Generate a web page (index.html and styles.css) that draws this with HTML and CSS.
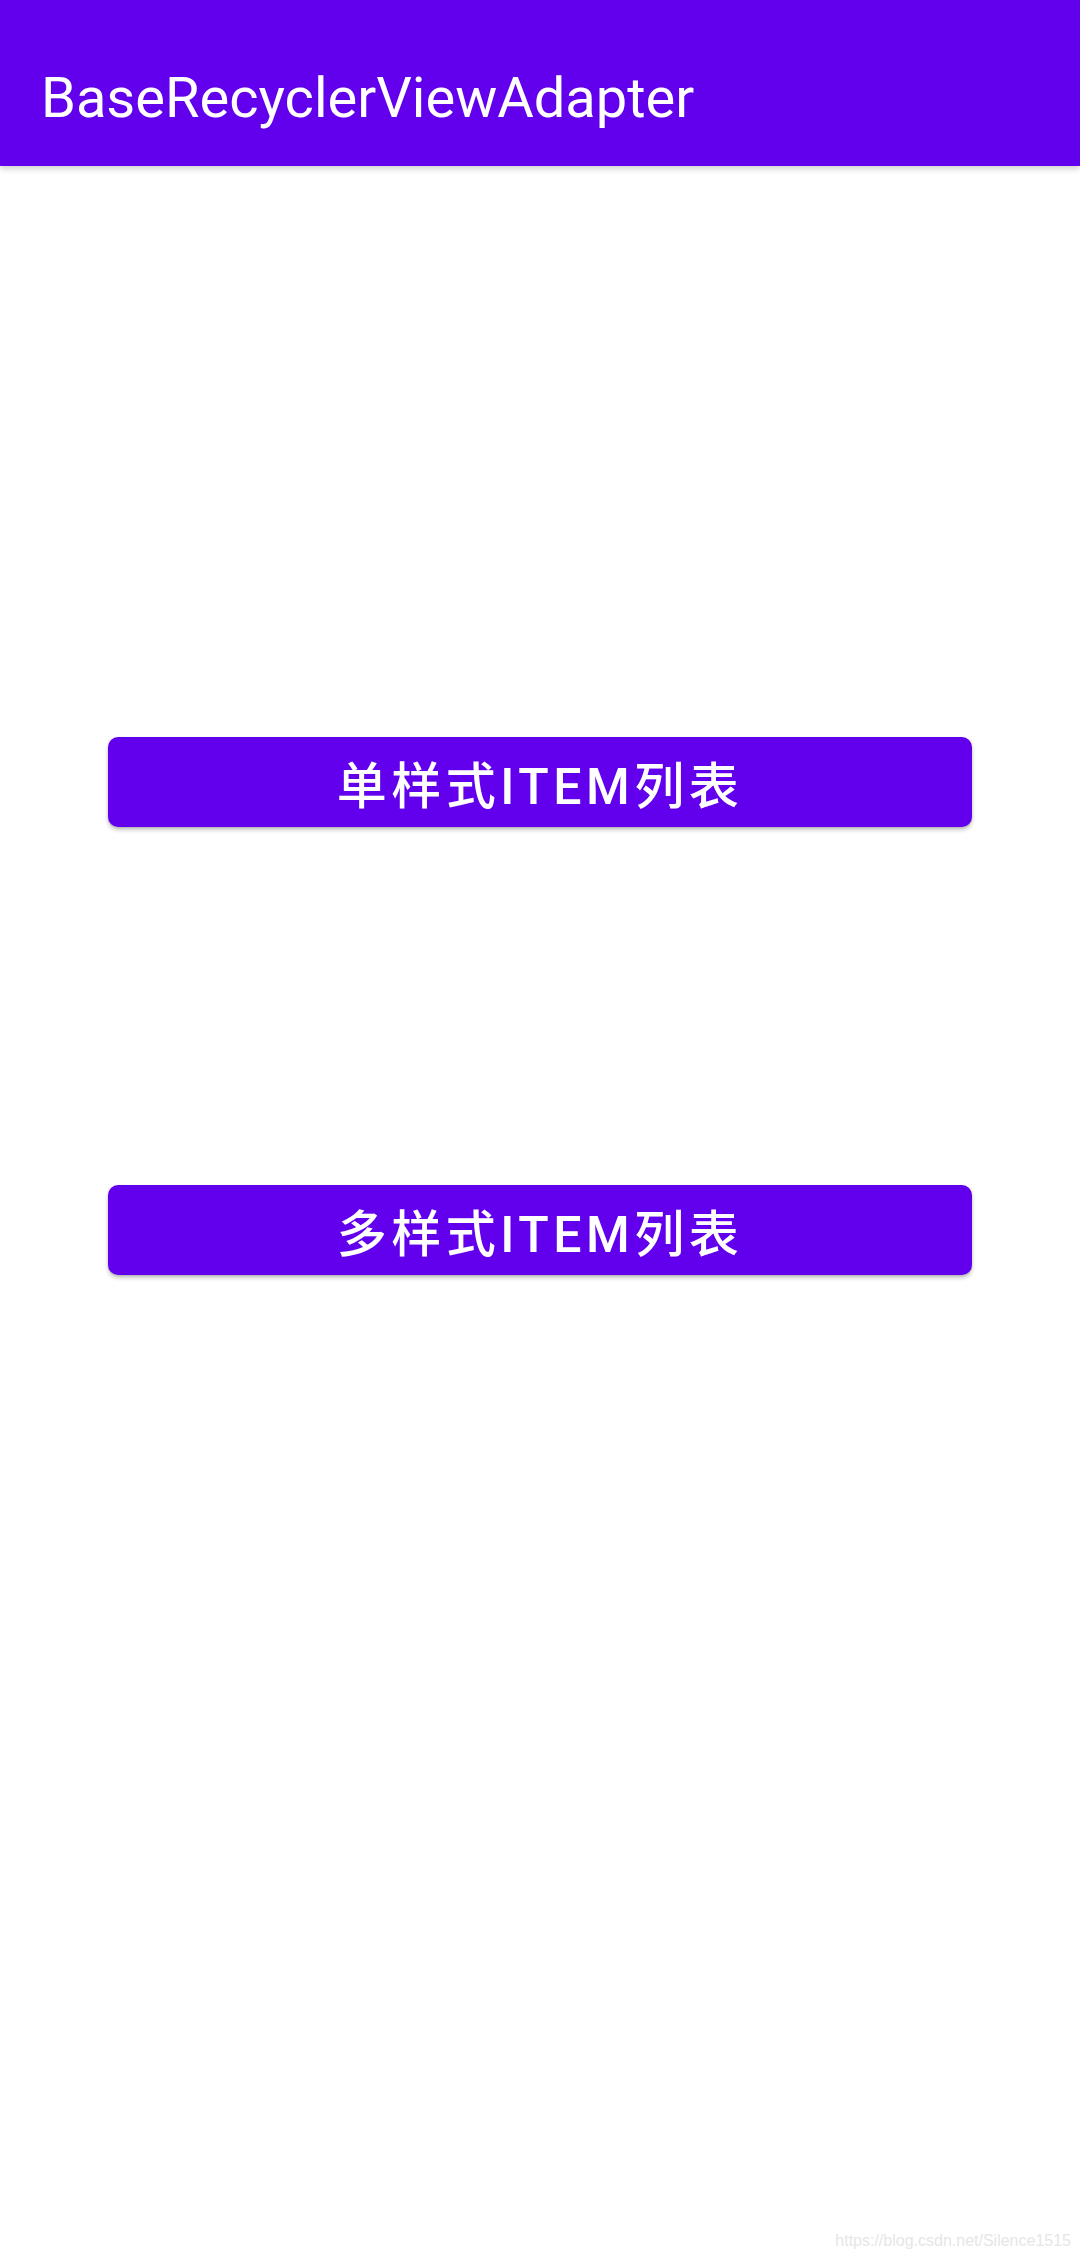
FILE: index.html
```html
<!DOCTYPE html>
<html lang="zh">
<head>
<meta charset="utf-8">
<title>BaseRecyclerViewAdapter</title>
<link rel="stylesheet" href="styles.css">
</head>
<body>
<div class="screen">
  <header class="toolbar">
    <h1 class="toolbar-title">BaseRecyclerViewAdapter</h1>
  </header>
  <main class="content">
    <button class="action-btn first">单样式ITEM列表</button>
    <button class="action-btn second">多样式ITEM列表</button>
  </main>
  <div class="watermark">https://blog.csdn.net/Silence1515</div>
</div>
</body>
</html>
```

FILE: styles.css
```css
html, body {
  margin: 0;
  padding: 0;
  background: #ffffff;
}
.screen {
  position: relative;
  width: 1080px;
  height: 2259px;
  overflow: hidden;
  background: #ffffff;
  font-family: Roboto, "Noto Sans CJK SC", sans-serif;
}
.toolbar {
  height: 166px;
  background: #6200ee;
  box-shadow: 0 3px 6px rgba(0, 0, 0, 0.18);
  display: flex;
  align-items: flex-start;
  padding: 0 0 0 41px;
  box-sizing: border-box;
  position: relative;
  z-index: 1;
}
.toolbar-title {
  margin: 70px 0 0 0;
  font-size: 56px;
  line-height: 56px;
  font-weight: 400;
  color: #ffffff;
  letter-spacing: 0;
}
.content {
  display: flex;
  flex-direction: column;
  align-items: center;
  padding-top: 571px;
}
.action-btn {
  width: 864px;
  height: 90px;
  border: none;
  border-radius: 10px;
  background: #6200ee;
  color: #ffffff;
  font-family: Roboto, "Noto Sans CJK SC", sans-serif;
  font-size: 50px;
  font-weight: 500;
  letter-spacing: 0.09em;
  padding: 0;
  box-shadow: 0 3px 4px rgba(0, 0, 0, 0.22), 0 1px 2px rgba(0, 0, 0, 0.12);
  display: flex;
  align-items: center;
  justify-content: center;
}
.action-btn.second {
  margin-top: 358px;
}
.watermark {
  position: absolute;
  right: 9px;
  bottom: 9px;
  font-family: "Liberation Sans", Arial, sans-serif;
  font-size: 16px;
  color: #e6e6e6;
}
```
